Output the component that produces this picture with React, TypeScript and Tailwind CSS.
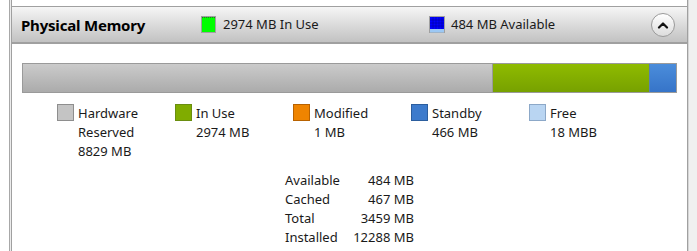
import React from "react";

const font = { fontFamily: '"Noto Sans", "Open Sans", sans-serif' };

function LegendItem({ color, border, lines }: { color: string; border: string; lines: string[] }) {
  return (
    <div className="w-[118px] flex items-start">
      <div
        className="w-[17px] h-[17px] border shrink-0"
        style={{ background: color, borderColor: border }}
      />
      <div className="ml-[4px] text-[13px] leading-[19px] text-[#1a1a1a]">
        {lines.map((l, i) => (
          <div key={i}>{l}</div>
        ))}
      </div>
    </div>
  );
}

export default function App() {
  return (
    <div className="w-[697px] h-[251px] bg-white flex overflow-hidden" style={font}>
      <div className="w-[9px] shrink-0 bg-white" />
      <div className="w-px shrink-0 bg-[#a8a8a8]" />
      <div className="w-px shrink-0 bg-[#ececec]" />
      <div className="flex-1 flex flex-col border-l border-r border-[#a0a0a0]">
        <div className="h-[6px]" />
        <div className="h-[38px] border-t border-b-2 border-[#a0a0a0] bg-gradient-to-b from-[#f6f6f6] to-[#c2c2c2] flex items-center">
          <div className="ml-[9px] w-[180px] text-[15px] font-bold text-black tracking-[-0.2px] mt-[1px]">Physical Memory</div>
          <div className="w-[228px] flex items-center">
            <svg width="15" height="17" viewBox="0 0 15 17">
              <rect x="0.5" y="0.5" width="14" height="16" fill="#00ff00" stroke="#a0a0a0" />
              <line x1="1" y1="1.5" x2="14" y2="1.5" stroke="#2a6a2a" strokeDasharray="1 1" />
            </svg>
            <span className="ml-[7px] text-[13px] text-[#1a1a1a]">2974 MB In Use</span>
          </div>
          <div className="flex items-center">
            <svg width="16" height="17" viewBox="0 0 16 17">
              <rect x="0.5" y="0.5" width="15" height="16" fill="#0000ff" stroke="#a0a0a0" />
              <g stroke="#0000a0" strokeWidth="0.6">
                <line x1="4" y1="1" x2="4" y2="13" />
                <line x1="7" y1="1" x2="7" y2="13" />
                <line x1="10" y1="1" x2="10" y2="13" />
                <line x1="13" y1="1" x2="13" y2="13" />
                <line x1="1" y1="4" x2="15" y2="4" />
                <line x1="1" y1="7" x2="15" y2="7" />
                <line x1="1" y1="10" x2="15" y2="10" />
              </g>
              <rect x="1" y="13" width="14" height="3.5" fill="#9cc8f4" />
            </svg>
            <span className="ml-[6px] text-[13px] text-[#1a1a1a]">484 MB Available</span>
          </div>
          <div className="ml-auto mr-[12px] w-[24px] h-[24px] rounded-full border border-[#9a9a9a] bg-gradient-to-b from-white to-[#dcdcdc] flex items-center justify-center">
            <svg width="12" height="8" viewBox="0 0 12 8">
              <path d="M2 6.5 L6 2.5 L10 6.5" fill="none" stroke="#111" strokeWidth="2.2" strokeLinecap="round" strokeLinejoin="round" />
            </svg>
          </div>
        </div>
        <div className="mt-[19px] ml-[10px] w-[655px] h-[30px] border border-[#9a9a9a] flex">
          <div className="w-[470px] bg-gradient-to-b from-[#cbcbcb] to-[#ababab] border-r border-[#9a9a9a]" />
          <div className="w-[156px] bg-gradient-to-b from-[#8fbb00] to-[#77a100]" />
          <div className="flex-1 bg-gradient-to-b from-[#4b8ddb] to-[#3674c8] border-l border-[#5a7fb0]" />
        </div>
        <div className="mt-[11px] ml-[45px] flex">
          <LegendItem color="#c4c4c4" border="#8e8e8e" lines={["Hardware", "Reserved", "8829 MB"]} />
          <LegendItem color="#80ac00" border="#6a8e10" lines={["In Use", "2974 MB"]} />
          <LegendItem color="#ef8400" border="#b86200" lines={["Modified", "1 MB"]} />
          <LegendItem color="#3d7bcc" border="#2c5e9e" lines={["Standby", "466 MB"]} />
          <LegendItem color="#b9d5f2" border="#8ca8c8" lines={["Free", "18 MBB"]} />
        </div>
        <div className="mt-[10px] ml-[273px] w-[129px] grid grid-cols-[auto_1fr] text-[13px] leading-[19px] text-[#1a1a1a]">
          <div>Available</div>
          <div className="text-right">484 MB</div>
          <div>Cached</div>
          <div className="text-right">467 MB</div>
          <div>Total</div>
          <div className="text-right">3459 MB</div>
          <div>Installed</div>
          <div className="text-right">12288 MB</div>
        </div>
      </div>
      <div className="w-px shrink-0 bg-[#d6d6d6]" />
      <div className="w-[8px] shrink-0 bg-[#f0f0f0]" />
    </div>
  );
}
